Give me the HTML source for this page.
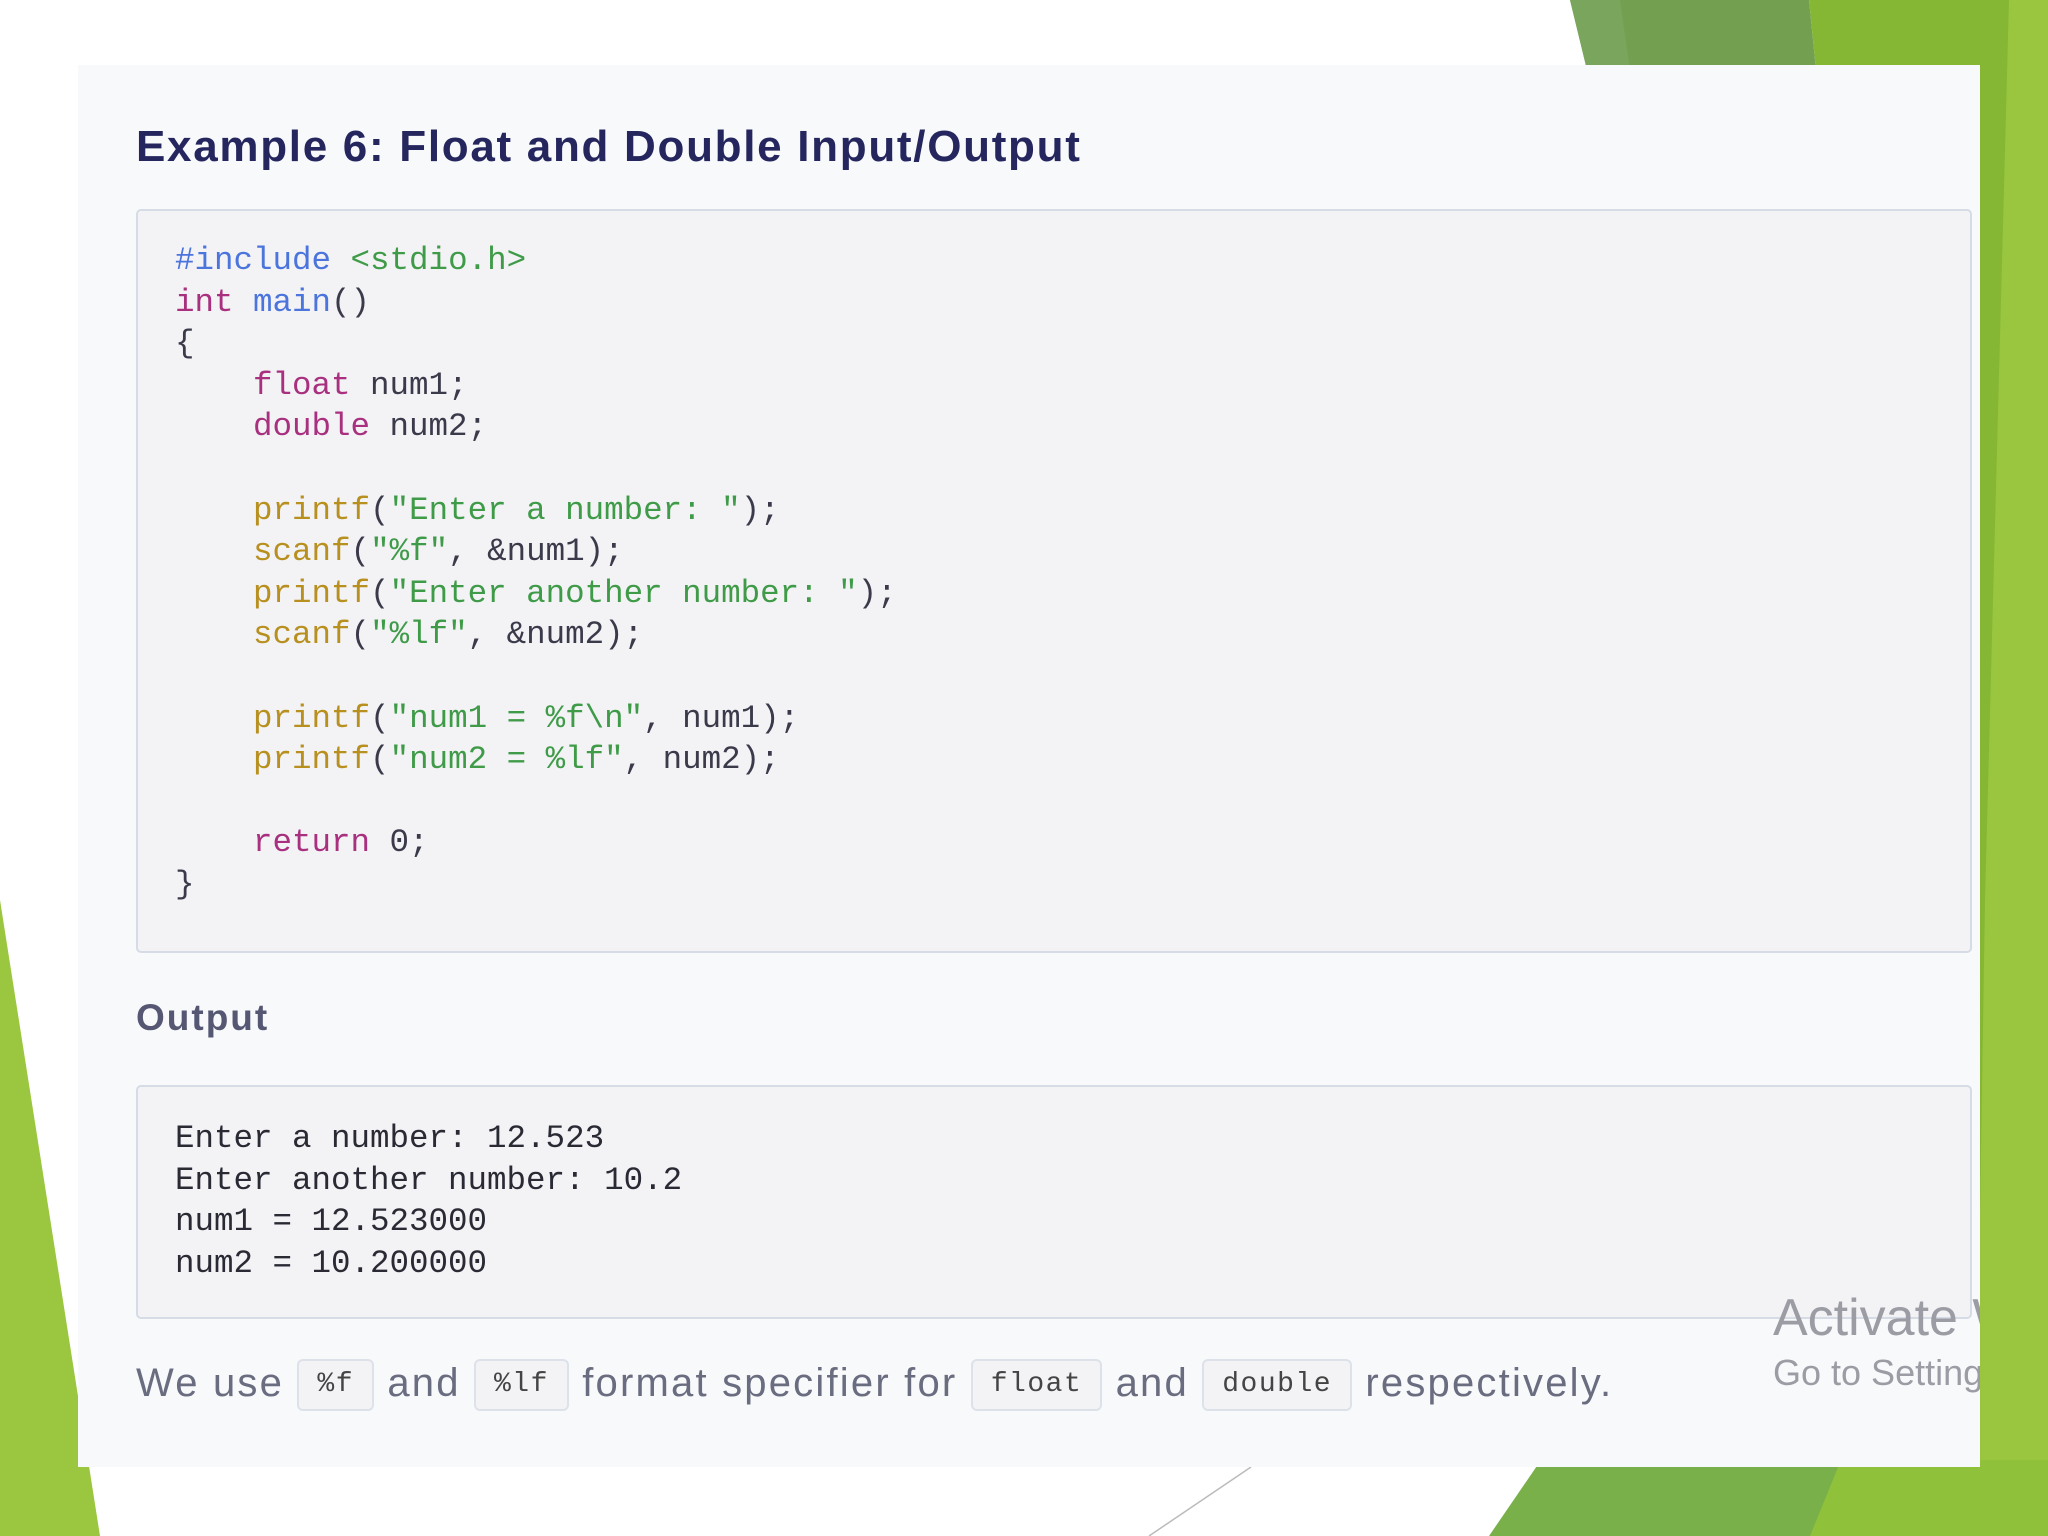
<!DOCTYPE html>
<html><head><meta charset="utf-8"><style>
*{margin:0;padding:0;box-sizing:border-box}
html,body{width:2048px;height:1536px;overflow:hidden;background:#fff;position:relative;font-family:"Liberation Sans",sans-serif}
.abs{position:absolute}
#panel{left:78px;top:65px;width:1902px;height:1402px;background:#f8f9fb}
pre{font-family:"Liberation Mono",monospace;font-size:32.5px;line-height:41.6px;color:#3a3a4a;position:absolute}
.box{position:absolute;background:#f3f3f6;border:2px solid #d5dce6;border-radius:5px}
.kw{color:#a8307e}.fn{color:#4b74dd}.st{color:#3f9b48}.pf{color:#b8901f}.pp{color:#4b74dd}
.ic{display:inline-block;font-family:"Liberation Mono",monospace;font-size:28px;letter-spacing:1.5px;color:#444;background:#f3f3f6;border:2px solid #dde2ea;border-radius:6px;padding:6px 18px;vertical-align:middle;line-height:36px}
</style></head><body>
<svg class="abs" style="left:0;top:0" width="2048" height="1536">
<polygon points="1570,0 1809,0 1816,70 1587,70" fill="#729f50"/>
<polygon points="1570,0 1620,0 1630,70 1587,70" fill="#79a65c"/>
<polygon points="1809,0 2048,0 2048,1536 1960,1536 1980,70 1816,70" fill="#85b735"/>
<polygon points="2009,0 2048,0 2048,1536 1975,1536 1985,900" fill="#9ac53f"/>
<polygon points="0,900 100,1536 0,1536" fill="#9bc640"/>
<polygon points="1541,1460 2048,1460 2048,1536 1489,1536" fill="#79b04a"/>
<polygon points="1841,1460 2048,1460 2048,1536 1810,1536" fill="#8fc13a"/>
<line x1="1251" y1="1467" x2="1149" y2="1536" stroke="#bbb" stroke-width="1.5"/>
</svg>
<div id="panel" class="abs"></div>
<div class="abs" style="left:136px;top:122px;font-size:44px;font-weight:bold;color:#25265e;white-space:nowrap;letter-spacing:1.7px">Example 6: Float and Double Input/Output</div>
<div class="box" style="left:136px;top:209px;width:1836px;height:744px"></div>
<pre style="left:175px;top:240px"><span class="pp">#include</span> <span class="st">&lt;stdio.h&gt;</span>
<span class="kw">int</span> <span class="fn">main</span>()
{
    <span class="kw">float</span> num1;
    <span class="kw">double</span> num2;

    <span class="pf">printf</span>(<span class="st">"Enter a number: "</span>);
    <span class="pf">scanf</span>(<span class="st">"%f"</span>, &amp;num1);
    <span class="pf">printf</span>(<span class="st">"Enter another number: "</span>);
    <span class="pf">scanf</span>(<span class="st">"%lf"</span>, &amp;num2);

    <span class="pf">printf</span>(<span class="st">"num1 = %f\n"</span>, num1);
    <span class="pf">printf</span>(<span class="st">"num2 = %lf"</span>, num2);

    <span class="kw">return</span> 0;
}</pre>
<div class="abs" style="left:136px;top:997px;font-size:37px;font-weight:bold;color:#565873;letter-spacing:2px">Output</div>
<div class="box" style="left:136px;top:1085px;width:1836px;height:234px"></div>
<pre style="left:175px;top:1118px;color:#2a2a35">Enter a number: 12.523
Enter another number: 10.2
num1 = 12.523000
num2 = 10.200000</pre>
<div class="abs" style="left:136px;top:1358px;font-size:40px;letter-spacing:2.2px;color:#6a6c80;white-space:nowrap;line-height:50px">We use <span class="ic">%f</span> and <span class="ic">%lf</span> format specifier for <span class="ic">float</span> and <span class="ic">double</span> respectively.</div>
<div class="abs" style="left:1773px;top:1288px;width:207px;height:120px;overflow:hidden;color:#9c9ca4;white-space:nowrap">
<div style="font-size:52px;line-height:60px">Activate Windows</div>
<div style="font-size:36px;line-height:50px">Go to Settings</div>
</div>
</body></html>
